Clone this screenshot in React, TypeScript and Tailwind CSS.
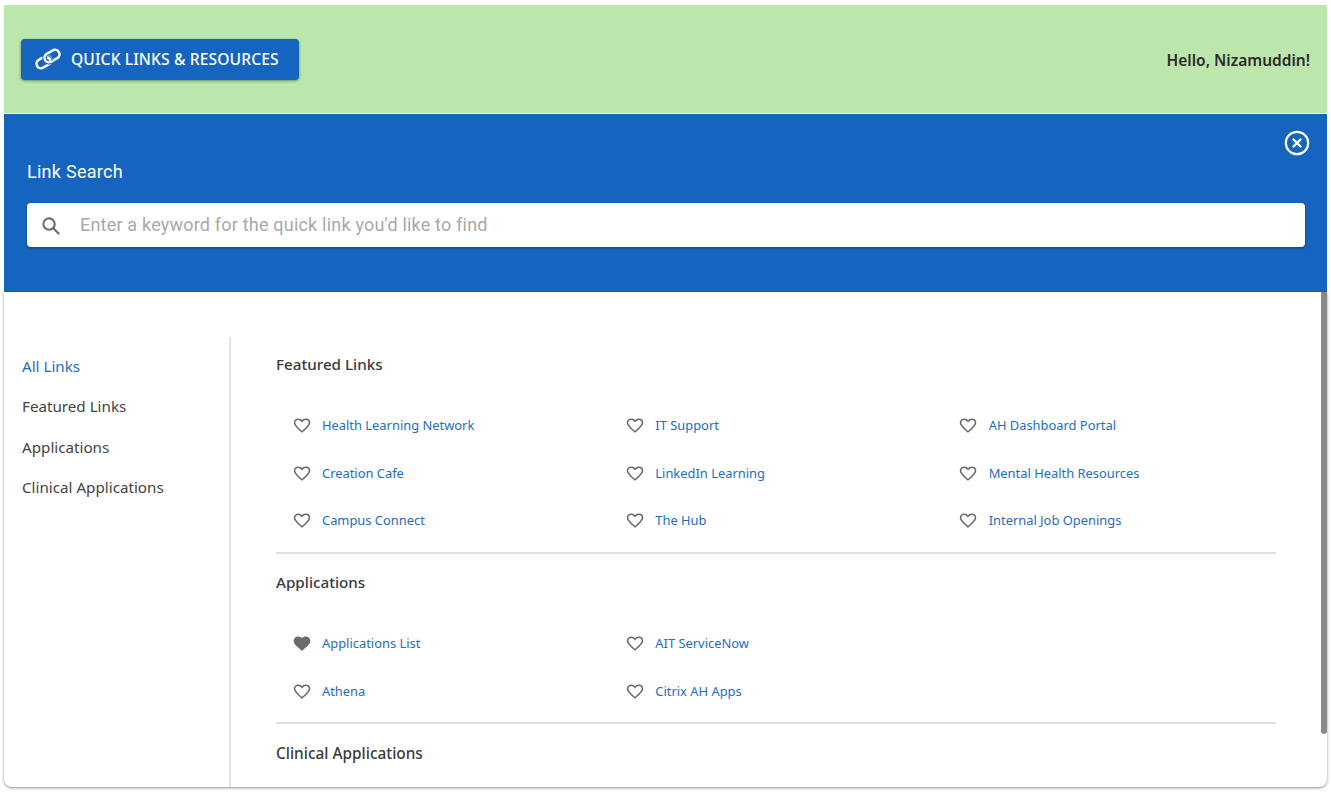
function HeartIcon({ filled }: { filled?: boolean }) {
  return (
    <span className="w-[20px] h-[20px] shrink-0 flex items-center justify-center">
      <svg viewBox="0 0 24 24" preserveAspectRatio="none" className="w-[20px] h-[19px] text-[#6b6b6b]" fill={filled ? "currentColor" : "none"} stroke="currentColor" strokeWidth={filled ? 0 : 1.9}>
        {filled ? (
          <path d="M12 21.35l-1.45-1.32C5.4 15.36 2 12.28 2 8.5 2 5.42 4.42 3 7.5 3c1.74 0 3.41.81 4.5 2.09C13.09 3.81 14.76 3 16.5 3 19.58 3 22 5.42 22 8.5c0 3.78-3.4 6.86-8.55 11.54L12 21.35z" />
        ) : (
          <path d="M12 20l-1.2-1.1C6 14.6 3 11.9 3 8.5 3 5.9 5 4 7.5 4c1.6 0 3.4.9 4.5 2.6C13.1 4.9 14.9 4 16.5 4 19 4 21 5.9 21 8.5c0 3.4-3 6.1-7.8 10.4L12 20z" />
        )}
      </svg>
    </span>
  );
}

function LinkItem({ label, filled }: { label: string; filled?: boolean }) {
  return (
    <div className="h-[47.5px] flex items-center pl-[15.8px] gap-[10.2px]">
      <HeartIcon filled={filled} />
      <a className="text-[12.9px] text-[#1f6dc4] leading-none">{label}</a>
    </div>
  );
}

export default function App() {
  return (
    <div className="h-[793px] overflow-hidden bg-white pt-[5px] pl-[4px] pr-[4px] pb-[6px]" style={{ fontFamily: '"Noto Sans", sans-serif' }}>
      <header className="h-[108px] bg-[#bbe6ac] flex items-center justify-between pl-[17px] pr-[17px]">
        <button className="h-[41px] w-[278px] rounded-[4px] bg-[#1565c0] text-white flex items-center pl-[13px] gap-[9px] shadow-[0_1px_3px_rgba(0,0,0,0.4)]">
          <svg viewBox="0 0 28 22" className="w-[28px] h-[22px]" fill="none" strokeWidth="2.5">
            <rect x="2" y="9.5" width="16" height="9" rx="4.5" stroke="white" transform="rotate(-30 10 14)" />
            <rect x="10" y="3.5" width="16" height="9" rx="4.5" stroke="#1565c0" strokeWidth="4.5" transform="rotate(-30 18 8)" />
            <rect x="10" y="3.5" width="16" height="9" rx="4.5" stroke="white" transform="rotate(-30 18 8)" />
            <path d="M13.2 9.2 A4.5 4.5 0 0 1 16.2 14.8 L11 17.8" stroke="#1565c0" strokeWidth="4.5" strokeDasharray="5 40" />
            <path d="M13.2 9.2 A4.5 4.5 0 0 1 16.2 14.8 L11 17.8" stroke="white" strokeDasharray="5 40" />
          </svg>
          <span className="text-[15.6px] font-medium leading-none tracking-[0.12px] mt-[2px]">QUICK LINKS &amp; RESOURCES</span>
        </button>
        <span className="text-[15.5px] font-semibold text-[#2b2b2b] mt-[3px]">Hello, Nizamuddin!</span>
      </header>

      <div className="mt-[1px] h-[178px] bg-[#1565c0] relative pl-[23px] pr-[22px] pt-[46px]" style={{ fontFamily: "Roboto, sans-serif" }}>
        <h2 className="text-[18px] leading-[24px] text-white tracking-[0.27px]">Link Search</h2>
        <div className="mt-[19px] h-[44px] bg-white rounded-[4px] flex items-center pl-[14px] shadow-[0_1px_3px_rgba(0,0,0,0.35)]">
          <svg viewBox="0 0 20 20" className="w-[19px] h-[19px]" fill="none" stroke="#6e6e6e" strokeWidth="2.2">
            <circle cx="8.5" cy="8.5" r="6" />
            <path d="M13 13l5.5 5.5" strokeLinecap="round" />
          </svg>
          <span className="ml-[20px] text-[18px] text-[#a9a9a9] leading-none tracking-[0.2px]">Enter a keyword for the quick link you'd like to find</span>
        </div>
        <svg viewBox="0 0 26 26" className="absolute right-[17px] top-[16px] w-[26px] h-[26px]" fill="none" stroke="white">
          <circle cx="13" cy="13" r="11.2" strokeWidth="2.2" />
          <path d="M9.5 9.5l7 7M16.5 9.5l-7 7" strokeWidth="2.4" strokeLinecap="round" />
        </svg>
      </div>

      <div className="relative h-[495px] rounded-b-[8px] bg-white shadow-[0_1px_3px_rgba(0,0,0,0.45)] flex pt-[45px] overflow-hidden">
        <nav className="w-[227px] border-r-2 border-[#e4e4e4] pl-[18px] pt-[9px] text-[15.2px] text-[#444] shrink-0">
          <div className="h-[40.4px] leading-[40px] text-[#1f6dc4]">All Links</div>
          <div className="h-[40.4px] leading-[40px]">Featured Links</div>
          <div className="h-[40.4px] leading-[40px]">Applications</div>
          <div className="h-[40.4px] leading-[40px]">Clinical Applications</div>
        </nav>
        <main className="w-[1000px] ml-[45px] pt-[17px]">
          <section className="border-b-2 border-[#e0e0e0]">
            <h3 className="text-[15.2px] font-medium text-[#3a3a3a] leading-[20px] h-[36px]">Featured Links</h3>
            <div className="grid grid-cols-3 pt-[12px] pb-[7px]">
              <LinkItem label="Health Learning Network" />
              <LinkItem label="IT Support" />
              <LinkItem label="AH Dashboard Portal" />
              <LinkItem label="Creation Cafe" />
              <LinkItem label="LinkedIn Learning" />
              <LinkItem label="Mental Health Resources" />
              <LinkItem label="Campus Connect" />
              <LinkItem label="The Hub" />
              <LinkItem label="Internal Job Openings" />
            </div>
          </section>
          <div className="h-[18px]" />
          <section className="border-b-2 border-[#e0e0e0]">
            <h3 className="text-[15.2px] font-medium text-[#3a3a3a] leading-[20px] h-[36px]">Applications</h3>
            <div className="grid grid-cols-3 pt-[12.4px] pb-[7.2px]">
              <LinkItem label="Applications List" filled />
              <LinkItem label="AIT ServiceNow" />
              <div />
              <LinkItem label="Athena" />
              <LinkItem label="Citrix AH Apps" />
            </div>
          </section>
          <div className="h-[20px]" />
          <h3 className="text-[15.4px] font-medium text-[#3a3a3a] leading-[20px]">Clinical Applications</h3>
        </main>
        <div className="absolute right-0 top-0 w-[6px] h-[442px] bg-[#8a8a8a] rounded-b-[3px]" />
      </div>
    </div>
  );
}
